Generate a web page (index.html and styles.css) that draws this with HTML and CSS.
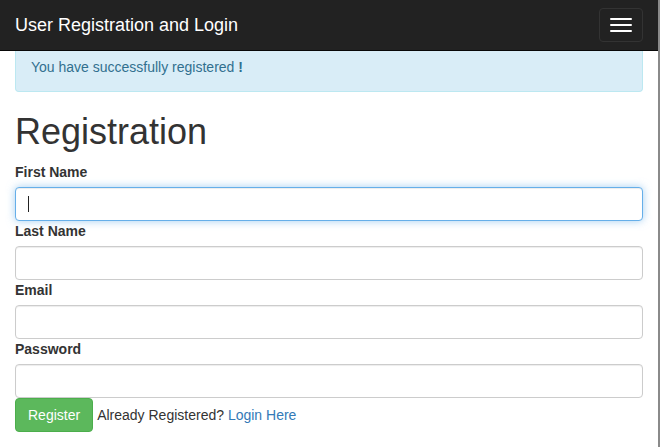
FILE: index.html
```html
<!DOCTYPE html>
<html>
<head>
<meta charset="utf-8">
<title>User Registration and Login</title>
<link rel="stylesheet" href="styles.css">
</head>
<body>
<div class="page">
  <nav class="navbar">
    <span class="brand">User Registration and Login</span>
    <button class="toggle" type="button" aria-label="Toggle navigation">
      <span class="bar"></span><span class="bar"></span><span class="bar"></span>
    </button>
  </nav>
  <main class="container">
    <div class="alert">You have successfully registered <strong>!</strong></div>
    <h1 class="title">Registration</h1>
    <form class="form">
      <div class="group">
        <label class="label" for="fn">First Name</label>
        <div class="input-wrap">
          <input class="control focused" id="fn" type="text">
          <span class="caret"></span>
        </div>
      </div>
      <div class="group">
        <label class="label" for="ln">Last Name</label>
        <input class="control" id="ln" type="text">
      </div>
      <div class="group">
        <label class="label" for="em">Email</label>
        <input class="control" id="em" type="text">
      </div>
      <div class="group">
        <label class="label" for="pw">Password</label>
        <input class="control" id="pw" type="password">
      </div>
      <div class="actions">
        <button class="btn-success" type="button">Register</button>
        <span class="already">Already Registered? <a class="link" href="#">Login Here</a></span>
      </div>
    </form>
  </main>
</div>
</body>
</html>
```

FILE: styles.css
```css
* { box-sizing: border-box; }
html, body {
  margin: 0;
  padding: 0;
  background: #fff;
}
body {
  font-family: "Liberation Sans", Arial, Helvetica, sans-serif;
  font-size: 14px;
  line-height: 20px;
  color: #333;
}
.page {
  width: 660px;
  height: 447px;
  overflow: hidden;
  border-right: 2px solid #8a8a8a;
}
.navbar {
  height: 51px;
  background: #222;
  border-bottom: 1px solid #080808;
  display: flex;
  align-items: center;
  justify-content: space-between;
  padding: 0 15px;
}
.brand {
  font-size: 18px;
  line-height: 20px;
  color: #fff;
}
.toggle {
  width: 44px;
  height: 34px;
  margin-top: -1px;
  background: transparent;
  border: 1px solid #333;
  border-radius: 4px;
  display: flex;
  flex-direction: column;
  align-items: center;
  justify-content: center;
  gap: 4px;
  padding: 0;
}
.bar {
  display: block;
  width: 22px;
  height: 2px;
  background: #fff;
  border-radius: 1px;
}
.container {
  padding: 0 15px;
}
.alert {
  background: #d9edf7;
  border: 1px solid #bce8f1;
  border-top: none;
  border-radius: 0 0 4px 4px;
  color: #31708f;
  padding: 6px 15px 14px 15px;
  margin-bottom: 20px;
}
.title {
  font-size: 36px;
  font-weight: 500;
  line-height: 1.1;
  margin: 0 0 10px 0;
  color: #333;
}
.form {
  margin: 0;
}
.group {
  display: flex;
  flex-direction: column;
}
.label {
  font-weight: bold;
  margin-bottom: 5px;
  line-height: 20px;
}
.input-wrap {
  position: relative;
}
.control {
  display: block;
  width: 100%;
  height: 34px;
  padding: 6px 12px;
  font: inherit;
  color: #555;
  background: #fff;
  border: 1px solid #ccc;
  border-radius: 4px;
  box-shadow: inset 0 1px 1px rgba(0,0,0,.075);
  outline: none;
}
.control.focused {
  border-color: #66afe9;
  box-shadow: inset 0 1px 1px rgba(0,0,0,.075), 0 0 8px rgba(102,175,233,.6);
}
.caret {
  position: absolute;
  left: 13px;
  top: 9px;
  width: 1px;
  height: 16px;
  background: #222;
}
.actions {
  display: flex;
  align-items: center;
  gap: 4px;
}
.btn-success {
  height: 34px;
  padding: 6px 12px;
  font: inherit;
  color: #fff;
  background: #5cb85c;
  border: 1px solid #4cae4c;
  border-radius: 4px;
}
.already {
  color: #333;
}
.link {
  color: #337ab7;
  text-decoration: none;
}
```
